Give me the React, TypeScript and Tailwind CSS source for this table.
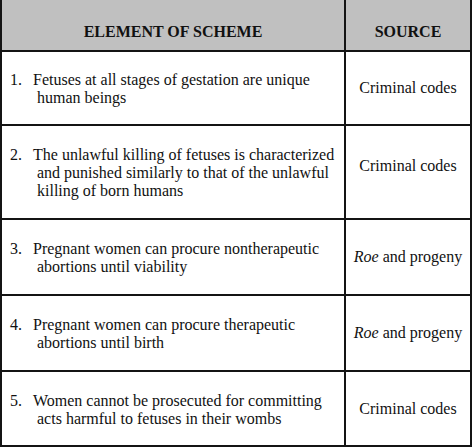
import React from 'react';

type Row = {
  num: string;
  lines: string;
  source: React.ReactNode;
  h: string;
  srcClass?: string;
};

const roe = (
  <>
    <i>Roe</i> and progeny
  </>
);

const rows: Row[] = [
  { num: '1.', lines: 'Fetuses at all stages of gestation are unique human beings', source: 'Criminal codes', h: 'h-[74px]' },
  {
    num: '2.',
    lines: 'The unlawful killing of fetuses is characterized and punished similarly to that of the unlawful killing of born humans',
    source: 'Criminal codes',
    h: 'h-[94px]',
    srcClass: 'pb-[12px]',
  },
  { num: '3.', lines: 'Pregnant women can procure nontherapeutic abortions until viability', source: roe, h: 'h-[76px]' },
  { num: '4.', lines: 'Pregnant women can procure therapeutic abortions until birth', source: roe, h: 'h-[76px]' },
  { num: '5.', lines: 'Women cannot be prosecuted for committing acts harmful to fetuses in their wombs', source: 'Criminal codes', h: 'h-[73px]' },
];

export default function App() {
  return (
    <div className="w-[474px] h-[448px] bg-white text-[#111] font-[family-name:'Liberation_Serif',serif] text-[16px] leading-[18px]">
      <div className="w-[472px] border-l-2 border-r-2 border-b-2 border-[#141414]">
        <div className="flex h-[52px] bg-[#c0c0c0] border-b-2 border-[#141414]">
          <div className="w-[342px] flex items-center justify-center font-bold pt-[14px]">ELEMENT OF SCHEME</div>
          <div className="flex-1 border-l-2 border-[#141414] flex items-center justify-center font-bold pt-[14px]">SOURCE</div>
        </div>
        {rows.map((r, i) => (
          <div
            key={r.num}
            className={`flex ${r.h} ${i < rows.length - 1 ? 'border-b-2 border-[#141414]' : ''}`}
          >
            <div className="w-[342px] flex items-center pl-[8px] pt-[2px]">
              <div className="flex">
                <span className="w-[23px] shrink-0">{r.num}</span>
                <span className="pl-[4px] indent-[-4px] pr-[6px]">{r.lines}</span>
              </div>
            </div>
            <div className="flex-1 border-l-2 border-[#141414] flex items-center justify-center">
              <span className={r.srcClass}>{r.source}</span>
            </div>
          </div>
        ))}
      </div>
    </div>
  );
}
